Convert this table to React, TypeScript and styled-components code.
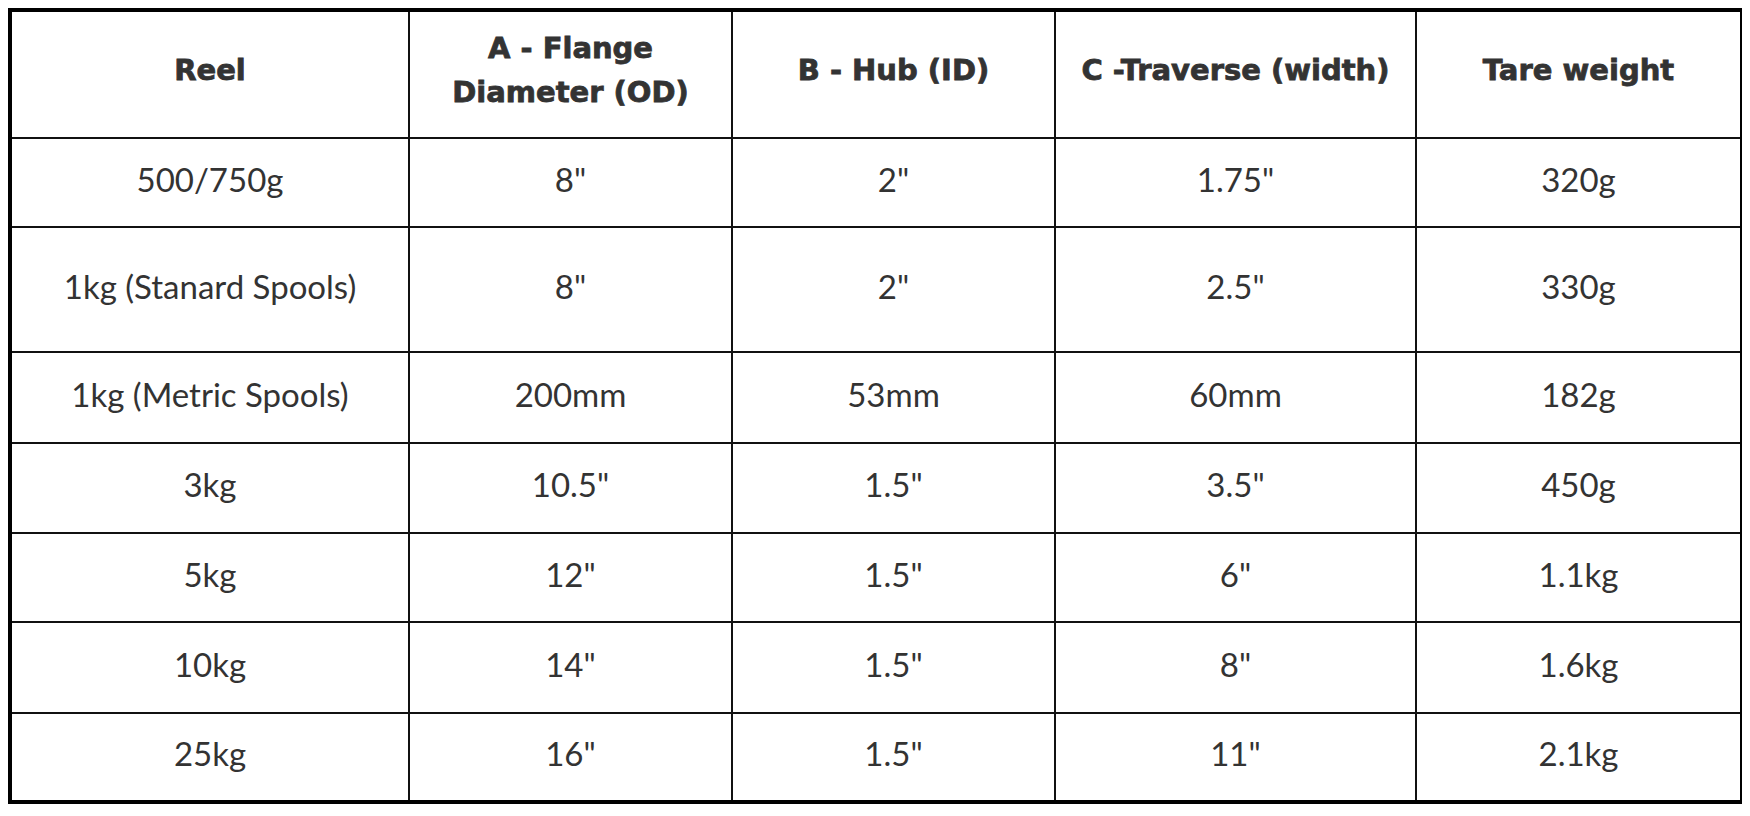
import styled, { createGlobalStyle } from 'styled-components';

const GlobalStyle = createGlobalStyle`
  body {
    margin: 8px;
    background: #ffffff;
  }
`;

type Row = { cells: string[]; height: number };

const columns = [399, 323, 323, 361, 326];

const headers = ['Reel', 'A - Flange Diameter (OD)', 'B - Hub (ID)', 'C -Traverse (width)', 'Tare weight'];

const rows: Row[] = [
  { cells: ['500/750g', '8"', '2"', '1.75"', '320g'], height: 89 },
  { cells: ['1kg (Stanard Spools)', '8"', '2"', '2.5"', '330g'], height: 125 },
  { cells: ['1kg (Metric Spools)', '200mm', '53mm', '60mm', '182g'], height: 91 },
  { cells: ['3kg', '10.5"', '1.5"', '3.5"', '450g'], height: 90 },
  { cells: ['5kg', '12"', '1.5"', '6"', '1.1kg'], height: 89 },
  { cells: ['10kg', '14"', '1.5"', '8"', '1.6kg'], height: 91 },
  { cells: ['25kg', '16"', '1.5"', '11"', '2.1kg'], height: 89 },
];

const App = () => {
  return (
    <>
      <GlobalStyle />
      <SpecTable>
        <colgroup>
          {columns.map((w, i) => (
            <col key={i} style={{ width: w }} />
          ))}
        </colgroup>
        <thead>
          <TableRow $height={128}>
            {headers.map((h) => (
              <HeadCell key={h}>{h}</HeadCell>
            ))}
          </TableRow>
        </thead>
        <tbody>
          {rows.map((row) => (
            <TableRow key={row.cells[0]} $height={row.height}>
              {row.cells.map((c, i) => (
                <Cell key={i}>{c}</Cell>
              ))}
            </TableRow>
          ))}
        </tbody>
      </SpecTable>
    </>
  );
};

export default App;

const SpecTable = styled.table`
  width: 1732px;
  table-layout: fixed;
  border-collapse: collapse;
  border: 4px solid #000;
  color: #333;
`;

const TableRow = styled.tr<{ $height: number }>`
  height: ${(p) => p.$height}px;
`;

const HeadCell = styled.th`
  border: 2px solid #111;
  padding: 0 14px 10px;
  font-family: 'DejaVu Sans', sans-serif;
  font-weight: 700;
  font-size: 29px;
  line-height: 44px;
  text-align: center;
  vertical-align: middle;
  color: #333;
  -webkit-text-stroke: 0.8px #333;
`;

const Cell = styled.td`
  border: 2px solid #111;
  padding: 0 12px 8px;
  font-family: Lato, 'Noto Sans', sans-serif;
  font-weight: 400;
  font-size: 33px;
  text-align: center;
  vertical-align: middle;
  white-space: nowrap;
`;
